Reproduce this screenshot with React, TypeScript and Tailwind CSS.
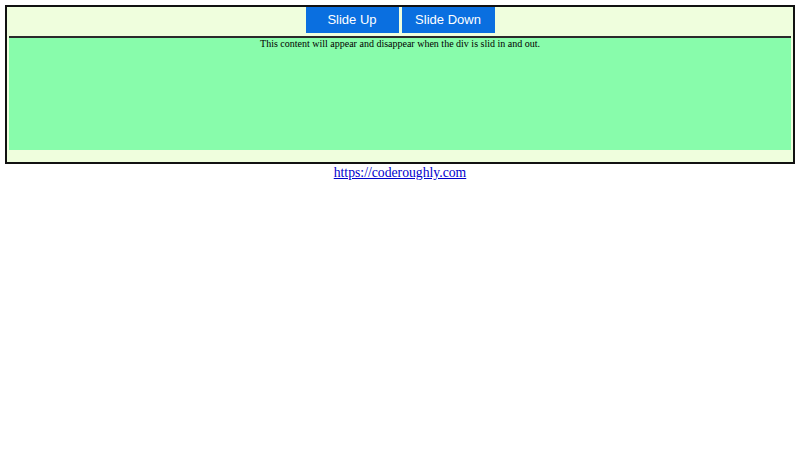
import React from "react";

export default function App() {
  return (
    <div className="w-[800px] h-[450px] bg-white px-[5px] pt-[5px]">
      <div className="border-2 border-[#111] bg-[#effedd] px-[2px] pb-[12px]">
        <div className="flex justify-center gap-[3px]">
          <button className="w-[93px] h-[26px] bg-[#0a6fe0] text-white text-[13px] font-['Liberation_Sans',Arial,sans-serif]">
            Slide Up
          </button>
          <button className="w-[93px] h-[26px] bg-[#0a6fe0] text-white text-[13px] font-['Liberation_Sans',Arial,sans-serif]">
            Slide Down
          </button>
        </div>
        <div className="mt-[3px] h-[114px] border-t-2 border-[#2a2a2a] bg-[#88fcab] text-center text-[10px] leading-[12px] text-black font-['Liberation_Serif','Times_New_Roman',serif]">
          This content will appear and disappear when the div is slid in and out.
        </div>
      </div>
      <div className="text-center font-['Liberation_Serif','Times_New_Roman',serif] text-[13.7px] leading-[17px]">
        <a href="#" className="underline text-[#0000cc]">
          https://coderoughly.com
        </a>
      </div>
    </div>
  );
}
